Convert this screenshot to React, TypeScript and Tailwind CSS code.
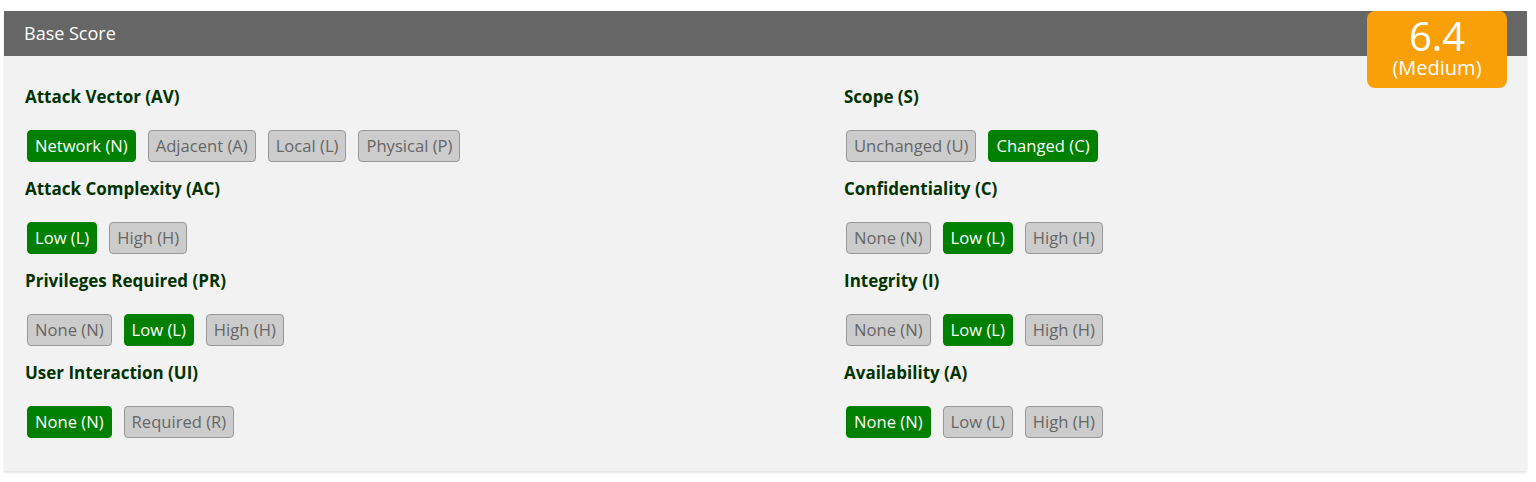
const metrics = [
  [
    { title: 'Attack Vector (AV)', options: ['Network (N)', 'Adjacent (A)', 'Local (L)', 'Physical (P)'], value: 0 },
    { title: 'Attack Complexity (AC)', options: ['Low (L)', 'High (H)'], value: 0 },
    { title: 'Privileges Required (PR)', options: ['None (N)', 'Low (L)', 'High (H)'], value: 1 },
    { title: 'User Interaction (UI)', options: ['None (N)', 'Required (R)'], value: 0 },
  ],
  [
    { title: 'Scope (S)', options: ['Unchanged (U)', 'Changed (C)'], value: 1 },
    { title: 'Confidentiality (C)', options: ['None (N)', 'Low (L)', 'High (H)'], value: 1 },
    { title: 'Integrity (I)', options: ['None (N)', 'Low (L)', 'High (H)'], value: 1 },
    { title: 'Availability (A)', options: ['None (N)', 'Low (L)', 'High (H)'], value: 0 },
  ],
]

function Metric({ title, options, value }: { title: string; options: string[]; value: number }) {
  return (
    <div className="mb-[15px]">
      <h3 className="h-6 text-[17px] leading-6 font-bold text-[#003300] mb-[21px]">{title}</h3>
      <div className="flex gap-3 ml-0.5">
        {options.map((opt, i) => (
          <button
            key={opt}
            className={
              i === value
                ? 'h-8 px-[7px] rounded-[4px] border border-[#008000] bg-[#008000] text-white text-[16.6px] leading-[22px]'
                : 'h-8 px-[7px] rounded-[4px] border border-[#999999] bg-[#cccccc] text-[#666666] text-[16.6px] leading-[22px]'
            }
          >
            {opt}
          </button>
        ))}
      </div>
    </div>
  )
}

export default function App() {
  return (
    <div className="min-h-screen bg-white pt-[11px] px-1" style={{ fontFamily: '"Open Sans", "Liberation Sans", sans-serif' }}>
      <div className="relative w-[1523px] bg-[#f2f2f2] shadow-[0_2px_2px_rgba(0,0,0,0.1)]">
        <div className="h-[45px] bg-[#666666] flex items-center pl-5 text-white text-[18px]">Base Score</div>
        <div className="absolute top-0 right-5 w-[140px] h-[77px] rounded-lg bg-[#f9a009] text-white flex flex-col items-center pt-[5px]">
          <span className="text-[40px] leading-[40px]">6.4</span>
          <span className="text-[20px] leading-[24px]">(Medium)</span>
        </div>
        <div className="grid grid-cols-[819px_1fr] pl-[21px] pt-[29px] pb-[18px]">
          {metrics.map((col, ci) => (
            <div key={ci}>
              {col.map((m) => (
                <Metric key={m.title} {...m} />
              ))}
            </div>
          ))}
        </div>
      </div>
    </div>
  )
}
